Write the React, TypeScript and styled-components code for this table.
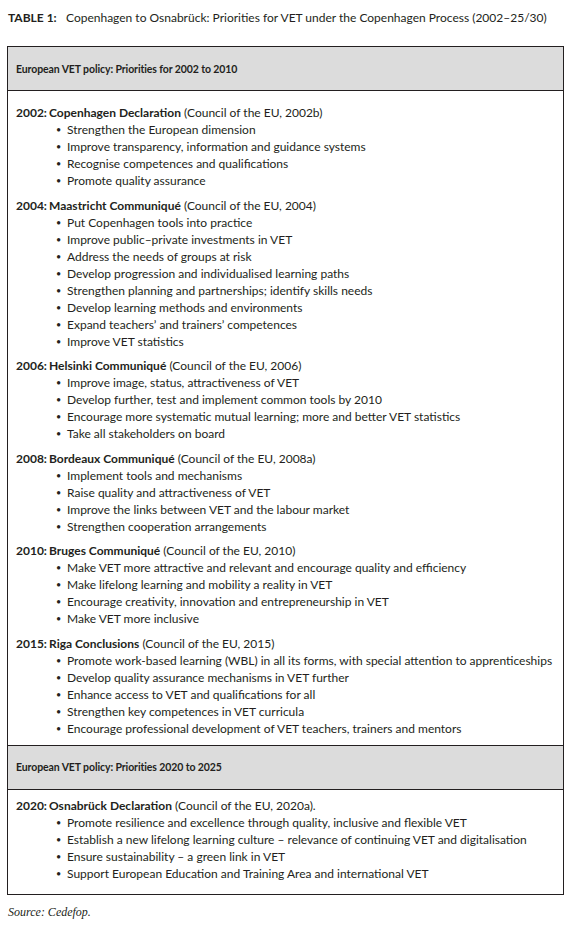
import React from "react";
import styled, { createGlobalStyle } from "styled-components";

const GlobalStyle = createGlobalStyle`
  body {
    margin: 0;
    background: #ffffff;
    color: #231f20;
    font-family: Lato, "Open Sans", sans-serif;
  }
`;

const Page = styled.div`
  width: 572px;
  height: 937px;
  padding: 10px 7px 0 7px;
  box-sizing: border-box;
`;

const Caption = styled.div`
  display: flex;
  font-size: 12px;
  line-height: 16px;
  margin-left: 1px;
  white-space: nowrap;
`;

const CaptionLabel = styled.span`
  font-weight: 700;
  width: 58px;
  flex: none;
`;

const Table = styled.div`
  margin-top: 20px;
  border: 1.5px solid #231f20;
  width: 557px;
  box-sizing: border-box;
`;

const GroupHeader = styled.div<{ $first?: boolean }>`
  background: #dcdcdc;
  height: 43px;
  display: flex;
  align-items: center;
  padding-left: 8px;
  font-size: 10.5px;
  letter-spacing: -0.1px;
  font-weight: 700;
  border-bottom: 1.5px solid #231f20;
  border-top: ${(p) => (p.$first ? "none" : "1.5px solid #231f20")};
`;

const GroupBody = styled.div<{ $top: number; $bottom: number }>`
  padding: ${(p) => `${p.$top}px 0 ${p.$bottom}px 8px`};
`;

const Entry = styled.div`
  & + & {
    margin-top: 7.5px;
  }
`;

const EntryTitle = styled.div`
  display: grid;
  grid-template-columns: 33px auto;
  font-size: 12px;
  line-height: 17px;
`;

const Year = styled.span`
  font-weight: 700;
`;

const Name = styled.span`
  font-weight: 700;
`;

const BulletList = styled.ul`
  list-style: none;
  margin: 0;
  padding: 0 0 0 40px;
`;

const Bullet = styled.li`
  display: flex;
  font-size: 12px;
  line-height: 17px;
  &::before {
    content: "•";
    width: 11px;
    flex: none;
    font-size: 9px;
  }
`;

const Source = styled.div`
  margin-top: 10px;
  margin-left: 1px;
  font-family: "Liberation Serif", serif;
  font-style: italic;
  font-size: 12px;
`;

type EntryData = { year: string; name: string; ref: string; items: string[] };

const first: EntryData[] = [
  {
    year: "2002:",
    name: "Copenhagen Declaration",
    ref: "(Council of the EU, 2002b)",
    items: [
      "Strengthen the European dimension",
      "Improve transparency, information and guidance systems",
      "Recognise competences and qualifications",
      "Promote quality assurance",
    ],
  },
  {
    year: "2004:",
    name: "Maastricht Communiqué",
    ref: "(Council of the EU, 2004)",
    items: [
      "Put Copenhagen tools into practice",
      "Improve public–private investments in VET",
      "Address the needs of groups at risk",
      "Develop progression and individualised learning paths",
      "Strengthen planning and partnerships; identify skills needs",
      "Develop learning methods and environments",
      "Expand teachers’ and trainers’ competences",
      "Improve VET statistics",
    ],
  },
  {
    year: "2006:",
    name: "Helsinki Communiqué",
    ref: "(Council of the EU, 2006)",
    items: [
      "Improve image, status, attractiveness of VET",
      "Develop further, test and implement common tools by 2010",
      "Encourage more systematic mutual learning; more and better VET statistics",
      "Take all stakeholders on board",
    ],
  },
  {
    year: "2008:",
    name: "Bordeaux Communiqué",
    ref: "(Council of the EU, 2008a)",
    items: [
      "Implement tools and mechanisms",
      "Raise quality and attractiveness of VET",
      "Improve the links between VET and the labour market",
      "Strengthen cooperation arrangements",
    ],
  },
  {
    year: "2010:",
    name: "Bruges Communiqué",
    ref: "(Council of the EU, 2010)",
    items: [
      "Make VET more attractive and relevant and encourage quality and efficiency",
      "Make lifelong learning and mobility a reality in VET",
      "Encourage creativity, innovation and entrepreneurship in VET",
      "Make VET more inclusive",
    ],
  },
  {
    year: "2015:",
    name: "Riga Conclusions",
    ref: "(Council of the EU, 2015)",
    items: [
      "Promote work-based learning (WBL) in all its forms, with special attention to apprenticeships",
      "Develop quality assurance mechanisms in VET further",
      "Enhance access to VET and qualifications for all",
      "Strengthen key competences in VET curricula",
      "Encourage professional development of VET teachers, trainers and mentors",
    ],
  },
];

const second: EntryData[] = [
  {
    year: "2020:",
    name: "Osnabrück Declaration",
    ref: "(Council of the EU, 2020a).",
    items: [
      "Promote resilience and excellence through quality, inclusive and flexible VET",
      "Establish a new lifelong learning culture – relevance of continuing VET and digitalisation",
      "Ensure sustainability – a green link in VET",
      "Support European Education and Training Area and international VET",
    ],
  },
];

const renderEntries = (entries: EntryData[]) =>
  entries.map((e) => (
    <Entry key={e.year}>
      <EntryTitle>
        <Year>{e.year}</Year>
        <span>
          <Name>{e.name}</Name> {e.ref}
        </span>
      </EntryTitle>
      <BulletList>
        {e.items.map((it) => (
          <Bullet key={it}>{it}</Bullet>
        ))}
      </BulletList>
    </Entry>
  ));

const App = () => {
  return (
    <Page>
      <GlobalStyle />
      <Caption>
        <CaptionLabel>TABLE 1:</CaptionLabel>
        <span>Copenhagen to Osnabrück: Priorities for VET under the Copenhagen Process (2002–25/30)</span>
      </Caption>
      <Table>
        <GroupHeader $first>European VET policy: Priorities for 2002 to 2010</GroupHeader>
        <GroupBody $top={13} $bottom={8}>
          {renderEntries(first)}
        </GroupBody>
        <GroupHeader>European VET policy: Priorities 2020 to 2025</GroupHeader>
        <GroupBody $top={7} $bottom={12}>
          {renderEntries(second)}
        </GroupBody>
      </Table>
      <Source>Source: Cedefop.</Source>
    </Page>
  );
};

export default App;
